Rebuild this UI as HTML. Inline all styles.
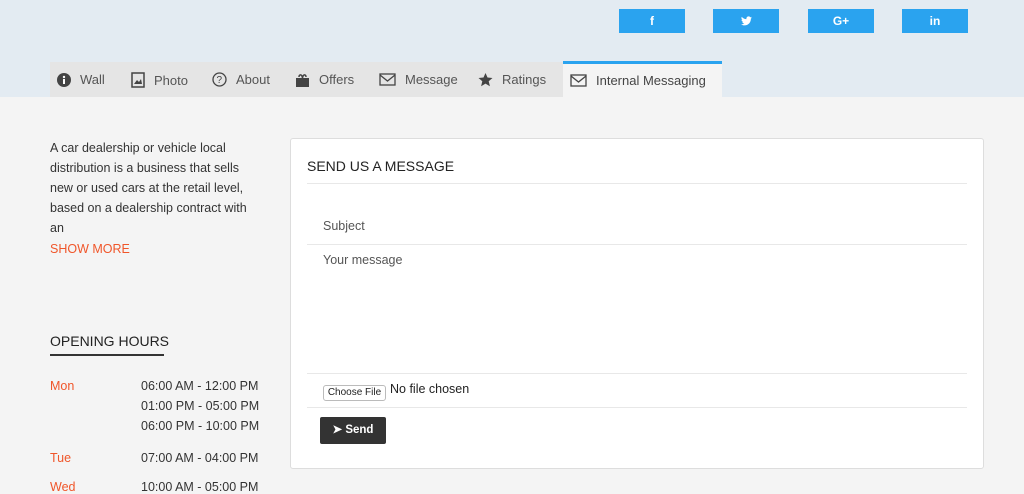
<!DOCTYPE html>
<html><head><style>
*{margin:0;padding:0;box-sizing:border-box}
body{width:1024px;height:486px;overflow:hidden;background:#f4f4f4;font-family:"Liberation Sans",sans-serif;color:#333;position:relative}
.top{position:absolute;left:0;top:0;width:1024px;height:97px;background:#e3ebf2}
.soc{position:absolute;top:9px;width:66px;height:24px;background:#2aa3ef;color:#fff;font-size:12px;font-weight:bold;text-align:center;line-height:24px}
.tabs{position:absolute;left:50px;top:62px;width:513px;height:35px;background:#e5e5e5}
.tab{position:absolute;top:72px;font-size:13px;color:#555;display:flex;align-items:center}
.tab svg{margin-right:9px}
.active{position:absolute;left:563px;top:61px;width:159px;height:36px;background:#f4f4f4;border-top:3px solid #2aa3ef}
.p{position:absolute;left:50px;font-size:12.5px;line-height:20px;color:#333}
.or{color:#f0562a}
.card{position:absolute;left:290px;top:138px;width:694px;height:331px;background:#fff;border:1px solid #ddd;border-radius:3px}
.line{position:absolute;left:16px;right:16px;height:1px;background:#e8e8e8}
.hr{position:absolute;font-size:12.5px}
</style></head><body>
<div class="top"></div>
<div class="soc" style="left:619px">f</div>
<div class="soc" style="left:713px"><svg width="11" height="10" style="vertical-align:-1px" viewBox="0 0 24 20"><path d="M24 2.5c-.9.4-1.8.6-2.8.8 1-.6 1.8-1.6 2.2-2.7-1 .6-2 1-3.1 1.2C19.4.7 18.1 0 16.6 0c-2.7 0-4.9 2.2-4.9 4.9 0 .4 0 .8.1 1.1C7.7 5.8 4.1 3.9 1.7.9c-.4.7-.7 1.6-.7 2.5 0 1.7.9 3.2 2.2 4.1-.8 0-1.6-.2-2.2-.6v.1c0 2.4 1.7 4.4 3.9 4.8-.4.1-.8.2-1.3.2-.3 0-.6 0-.9-.1.6 2 2.4 3.4 4.6 3.4-1.7 1.3-3.8 2.1-6.1 2.1-.4 0-.8 0-1.2-.1 2.2 1.4 4.8 2.2 7.5 2.2 9.1 0 14-7.5 14-14v-.6c1-.7 1.8-1.6 2.5-2.5z" fill="#fff"/></svg></div>
<div class="soc" style="left:808px">G+</div>
<div class="soc" style="left:902px">in</div>
<div class="tabs"></div>
<div class="active"></div>
<div class="tab" style="left:57px"><svg width="14" height="14"><circle cx="7" cy="7" r="7" fill="#444"/><rect x="6" y="6" width="2" height="5" fill="#fff"/><circle cx="7" cy="4" r="1.2" fill="#fff"/></svg>Wall</div>
<div class="tab" style="left:131px"><svg width="14" height="16"><rect x="1" y="1" width="12" height="14" fill="none" stroke="#444" stroke-width="1.5"/><path d="M3 12l3-4 2 2 2-3 1 5z" fill="#444"/></svg>Photo</div>
<div class="tab" style="left:212px"><svg width="15" height="15"><circle cx="7.5" cy="7.5" r="6.5" fill="none" stroke="#444" stroke-width="1.3"/><text x="4.5" y="11" font-size="10" fill="#444">?</text></svg>About</div>
<div class="tab" style="left:295px"><svg width="15" height="14"><rect x="1" y="5" width="13" height="9" fill="#444"/><path d="M4 4c0-3 3-3 3.5 1c.5-4 3.5-4 3.5-1" fill="none" stroke="#444" stroke-width="1.5"/></svg>Offers</div>
<div class="tab" style="left:379px"><svg width="17" height="13"><rect x="1" y="1" width="15" height="11" fill="none" stroke="#444" stroke-width="1.3"/><path d="M1 2l7.5 6L16 2" fill="none" stroke="#444" stroke-width="1.3"/></svg>Message</div>
<div class="tab" style="left:478px"><svg width="15" height="15"><path d="M7.5 1l2 4.5 5 .5-3.8 3.3 1.2 5-4.4-2.7-4.4 2.7 1.2-5L.5 6l5-.5z" fill="#444"/></svg>Ratings</div>
<div class="tab" style="left:570px;top:73px;color:#444"><svg width="17" height="13"><rect x="1" y="1" width="15" height="11" fill="none" stroke="#444" stroke-width="1.3"/><path d="M1 2l7.5 6L16 2" fill="none" stroke="#444" stroke-width="1.3"/></svg>Internal Messaging</div>

<div class="p" style="top:138px">A car dealership or vehicle local<br>distribution is a business that sells<br>new or used cars at the retail level,<br>based on a dealership contract with<br>an</div>
<div class="p or" style="top:239px">SHOW MORE</div>
<div class="p" style="top:331px;font-size:14px;color:#222">OPENING HOURS</div>
<div style="position:absolute;left:50px;top:354px;width:114px;height:2px;background:#333"></div>
<div class="hr or" style="left:50px;top:379px">Mon</div>
<div class="hr" style="left:141px;top:376px;line-height:20px">06:00 AM - 12:00 PM<br>01:00 PM - 05:00 PM<br>06:00 PM - 10:00 PM</div>
<div class="hr or" style="left:50px;top:451px">Tue</div>
<div class="hr" style="left:141px;top:451px">07:00 AM - 04:00 PM</div>
<div class="hr or" style="left:50px;top:480px">Wed</div>
<div class="hr" style="left:141px;top:480px">10:00 AM - 05:00 PM</div>

<div class="card">
<div style="position:absolute;left:16px;top:19px;font-size:14px;color:#222">SEND US A MESSAGE</div>
<div class="line" style="top:44px"></div>
<div style="position:absolute;left:32px;top:80px;font-size:12.5px;color:#555">Subject</div>
<div class="line" style="top:105px"></div>
<div style="position:absolute;left:32px;top:114px;font-size:12.5px;color:#555">Your message</div>
<div class="line" style="top:234px"></div>
<div style="position:absolute;left:32px;top:246px;width:63px;height:16px;border:1px solid #bbb;border-radius:3px;font-size:10px;text-align:center;line-height:14px;color:#222">Choose File</div>
<div style="position:absolute;left:99px;top:243px;font-size:12.5px;color:#222">No file chosen</div>
<div class="line" style="top:268px"></div>
<div style="position:absolute;left:29px;top:278px;width:66px;height:27px;background:#333;border-radius:2px;color:#fff;font-size:11.5px;font-weight:bold;line-height:27px;text-align:center">&#x27A4; Send</div>
</div>
</body></html>
